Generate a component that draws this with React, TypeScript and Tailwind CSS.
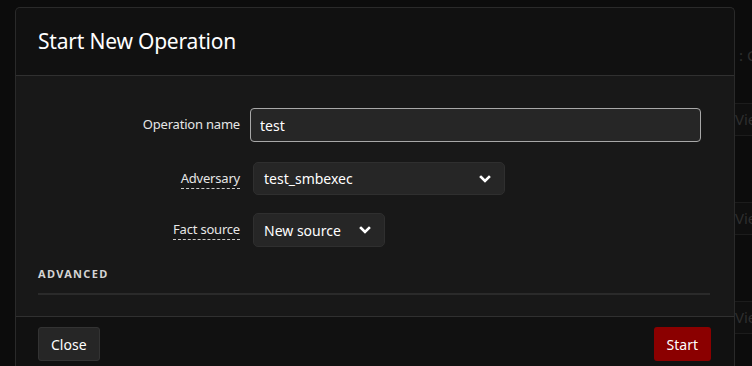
import React from "react";

const ChevronDown: React.FC = () => (
  <svg width="12" height="12" viewBox="0 0 12 12" className="text-white">
    <path d="M2 4l4 4 4-4" stroke="currentColor" strokeWidth="2.6" fill="none" strokeLinecap="square" />
  </svg>
);

const BackdropStrip: React.FC = () => (
  <div className="flex-1 flex flex-col pt-[44px] text-[15px] text-[#2e2e2e] overflow-hidden whitespace-nowrap">
    <div className="h-[59px] pl-[4px]">: Co</div>
    <div className="h-[33px] border-y border-[#1c1c1c] bg-[#0f0f0f] flex items-center">View</div>
    <div className="h-[66px]" />
    <div className="h-[33px] border-y border-[#1c1c1c] bg-[#0f0f0f] flex items-center">View</div>
    <div className="h-[66px]" />
    <div className="h-[33px] border-y border-[#1c1c1c] bg-[#0f0f0f] flex items-center">View</div>
  </div>
);

export default function App() {
  return (
    <div
      className="w-[752px] h-[366px] bg-[#0c0c0c] flex overflow-hidden text-[#eeeeee]"
      style={{ fontFamily: '"Noto Sans", "Open Sans", Arial, sans-serif' }}
    >
      <div className="ml-[15px] mt-[7px] w-[720px] shrink-0 flex flex-col rounded-t-[5px] border border-[#2a2a2a] border-b-0 bg-[#111111] overflow-hidden">
        {/* Header */}
        <header className="h-[68px] px-[22px] flex items-center border-b border-[#303030]">
          <h1 className="text-[21px] text-white tracking-[-0.2px]">Start New Operation</h1>
        </header>

        {/* Body */}
        <main className="h-[240px] bg-[#181818] px-[22px] pt-[32px]">
          <div className="flex items-center gap-[10px]">
            <label className="w-[202px] text-right text-[13px] tracking-[-0.2px] text-[#e6e6e6]">Operation name</label>
            <input
              readOnly
              value="test"
              className="w-[451px] h-[34px] rounded-[4px] border border-[#a8a8a8] bg-[#262626] px-[9px] text-[14px] text-white outline-none"
            />
          </div>

          <div className="flex items-center gap-[13px] mt-[20px]">
            <label className="w-[202px] text-right text-[13px] tracking-[-0.2px] text-[#e6e6e6]">
              <span className="border-b border-dashed border-[#cccccc] pb-[1px]">Adversary</span>
            </label>
            <div className="w-[252px] h-[33px] rounded-[5px] border border-[#2f2f2f] bg-[#262626] pl-[10px] pr-[13px] flex items-center justify-between text-[14px] text-white">
              <span>test_smbexec</span>
              <ChevronDown />
            </div>
          </div>

          <div className="flex items-center gap-[13px] mt-[18px]">
            <label className="w-[202px] text-right text-[13px] tracking-[-0.2px] text-[#e6e6e6]">
              <span className="border-b border-dashed border-[#cccccc] pb-[1px]">Fact source</span>
            </label>
            <div className="w-[132px] h-[34px] rounded-[5px] border border-[#2f2f2f] bg-[#262626] pl-[10px] pr-[13px] flex items-center justify-between text-[14px] text-white">
              <span>New source</span>
              <ChevronDown />
            </div>
          </div>

          <h2 className="mt-[19px] text-[11px] font-bold tracking-[1.3px] text-[#d4d4d4]">ADVANCED</h2>
          <div className="mt-[10px] h-[2px] w-[672px] bg-[#2a2a2a]" />
        </main>

        {/* Footer */}
        <footer className="flex-1 border-t border-[#303030] px-[22px] pt-[10px] flex justify-between items-start">
          <button className="h-[34px] px-[12px] rounded-[3px] border border-[#333333] bg-[#262626] text-[14px] text-white">
            Close
          </button>
          <button className="h-[34px] px-[13px] mr-[1px] rounded-[3px] bg-[#8b0000] text-[14px] text-white">
            Start
          </button>
        </footer>
      </div>
      <BackdropStrip />
    </div>
  );
}
